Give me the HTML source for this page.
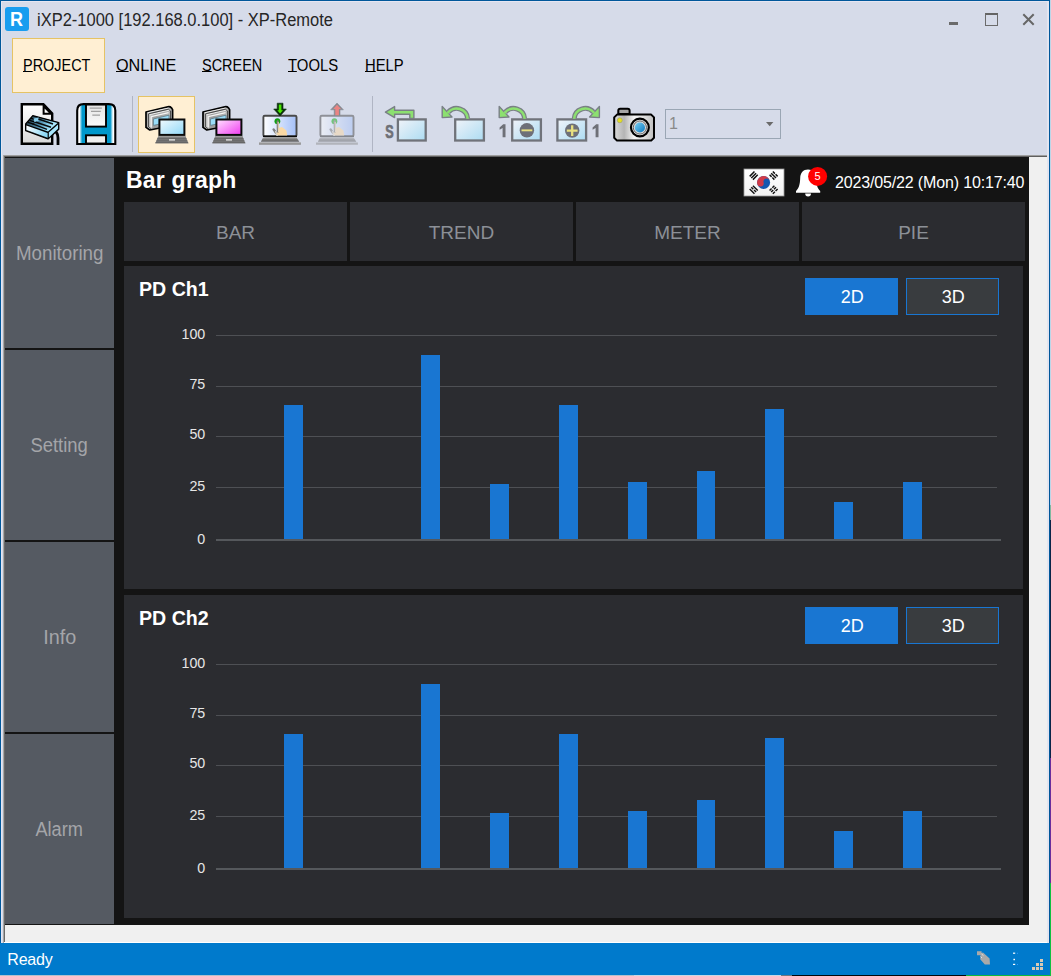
<!DOCTYPE html>
<html>
<head>
<meta charset="utf-8">
<title>XP-Remote</title>
<style>
html,body{margin:0;padding:0;}
body{width:1051px;height:976px;overflow:hidden;position:relative;background:#D6DBE9;font-family:"Liberation Sans",sans-serif;}
.abs{position:absolute;}
.t{position:absolute;white-space:nowrap;line-height:1;}
/* window frame */
#bTop{left:0;top:0;width:1050px;height:1px;background:#00579A;}
#bLeft{left:0;top:0;width:1px;height:943px;background:#00579A;}
#bRight{left:1049px;top:0;width:1px;height:943px;background:#00579A;}
#bRight2{left:1050px;top:0;width:1px;height:976px;background:linear-gradient(180deg,#BCD6E8 0,#BCD6E8 505px,#7FB8A0 505px,#7FB8A0 520px,#0A2448 520px,#0A2448 758px,#6A2C9C 758px,#6A2C9C 883px,#12C040 883px,#12C040 976px);}
#hlL{left:1px;top:1px;width:1px;height:942px;background:#E6E6F2;}
#hlT{left:1px;top:1px;width:1048px;height:1px;background:#E6E6F2;}
#hlR{left:1047px;top:2px;width:2px;height:941px;background:#E3E5F0;}
/* menu */
.menu{position:absolute;top:57px;font-size:17px;color:#000;line-height:17px;white-space:nowrap;transform-origin:0 0;}
.menu u{text-decoration:underline;text-decoration-thickness:1px;text-underline-offset:0.4px;}
/* client */
#client{left:3px;top:155px;width:1044px;height:788px;background:#F0F0F0;}
#screen{left:5px;top:157px;width:1024px;height:768px;background:#141414;overflow:hidden;}
.sb{position:absolute;left:0;width:109px;height:190px;background:#555A62;color:#A4A5A9;font-size:20px;text-align:center;line-height:191px;}
.sb span{display:inline-block;transform-origin:50% 50%;}
.tab{position:absolute;top:45px;width:223px;height:59px;background:#2B2C30;color:#8C9097;font-size:19px;text-align:center;line-height:61px;}
.panel{position:absolute;left:119px;width:899px;height:323px;background:#2B2C30;}
.ptitle{position:absolute;left:15px;top:12.6px;font-size:19.6px;font-weight:bold;color:#fff;line-height:20px;white-space:nowrap;}
.b2d{position:absolute;left:681px;top:12px;width:93px;height:37px;background:#1976D2;color:#fff;font-size:18px;text-align:center;line-height:38px;text-indent:1.5px;}
.b3d{position:absolute;left:782px;top:12px;width:91px;height:35px;background:#393C3F;border:1px solid #1976D2;color:#fff;font-size:18px;text-align:center;line-height:36px;text-indent:1.5px;}
.gl{position:absolute;left:92px;width:781px;height:1px;background:#4E5054;}
.base{position:absolute;left:92px;top:273px;width:785px;height:2px;background:#55585C;}
.yl{position:absolute;left:40px;width:41.3px;text-align:right;font-size:15.5px;color:#E6E6E6;line-height:14px;transform:scaleX(0.92);transform-origin:100% 50%;margin-top:-0.5px;}
.bar{position:absolute;width:19px;background:#1976D2;}
/* status */
#status{left:0;top:943px;width:1050px;height:32px;background:#007ACC;}
</style>
</head>
<body>
<!-- title bar -->
<div class="abs" id="titleicon" style="left:5px;top:7px;width:24px;height:24px;background:#189DEF;border-radius:3px;"></div>
<div class="t" id="titleR" style="left:9.8px;top:8.8px;font-size:20px;font-weight:bold;color:#fff;transform:scaleX(0.9);transform-origin:0 0;">R</div>
<div class="t" id="title" style="left:37px;top:11.5px;font-size:17.5px;color:#262626;transform:scaleX(0.942);transform-origin:0 0;">iXP2-1000 [192.168.0.100] - XP-Remote</div>
<!-- window controls -->
<div class="abs" style="left:949px;top:22px;width:9px;height:3px;background:#6B6B6B;"></div>
<div class="abs" style="left:985px;top:13px;width:11px;height:10px;border:1px solid #6B6B6B;border-top:2px solid #646464;"></div>
<svg class="abs" style="left:1021px;top:12px;" width="15" height="15" viewBox="0 0 15 15"><path d="M2.3 2.3 L12.7 12.7 M12.7 2.3 L2.3 12.7" stroke="#666666" stroke-width="2" fill="none"/></svg>

<!-- menu -->
<div class="abs" style="left:12px;top:38px;width:91px;height:53px;background:#FFEFD3;border:1px solid #E5C365;"></div>
<div class="menu" id="m1" style="left:23px;transform:scaleX(0.85);"><u>P</u>ROJECT</div>
<div class="menu" id="m2" style="left:116px;transform:scaleX(0.953);"><u>O</u>NLINE</div>
<div class="menu" id="m3" style="left:202px;transform:scaleX(0.851);"><u>S</u>CREEN</div>
<div class="menu" id="m4" style="left:288px;transform:scaleX(0.876);"><u>T</u>OOLS</div>
<div class="menu" id="m5" style="left:365px;transform:scaleX(0.871);"><u>H</u>ELP</div>

<!-- toolbar -->
<div class="abs" style="left:132px;top:96px;width:1px;height:56px;background:#B0B5C4;"></div>
<div class="abs" style="left:372px;top:96px;width:1px;height:56px;background:#B0B5C4;"></div>
<div class="abs" style="left:138px;top:96px;width:55px;height:55px;background:#FFEFD3;border:1px solid #E5C365;"></div>
<!--ICONS-START-->
<svg class="abs" style="left:0;top:0;" width="1051" height="156" viewBox="0 0 1051 156">
<defs>
<linearGradient id="gDoc" x1="0" y1="0" x2="0" y2="1"><stop offset="0" stop-color="#FFFFFF"/><stop offset="1" stop-color="#D8D8D8"/></linearGradient>
<linearGradient id="gPlugF" x1="0" y1="0" x2="1" y2="0.5"><stop offset="0" stop-color="#FFFFFF"/><stop offset="1" stop-color="#8ED8F4"/></linearGradient>
<linearGradient id="gPlugT" x1="0" y1="0" x2="1" y2="0.3"><stop offset="0" stop-color="#1C2A30"/><stop offset="0.5" stop-color="#4A88A6"/><stop offset="0.78" stop-color="#8AD4F0"/><stop offset="1" stop-color="#B4ECFF"/></linearGradient>
<linearGradient id="gLbl" x1="0" y1="0" x2="0" y2="1"><stop offset="0" stop-color="#E4E4E4"/><stop offset="1" stop-color="#FBFBFB"/></linearGradient>
<linearGradient id="gScrB" x1="0" y1="0" x2="1" y2="1"><stop offset="0" stop-color="#F2FAFE"/><stop offset="1" stop-color="#8FD8F8"/></linearGradient>
<linearGradient id="gScrP" x1="0" y1="0" x2="1" y2="1"><stop offset="0" stop-color="#FFE4FF"/><stop offset="1" stop-color="#F038F0"/></linearGradient>
<linearGradient id="gHmi" x1="0" y1="0" x2="1" y2="0"><stop offset="0" stop-color="#8A8A8A"/><stop offset="0.12" stop-color="#D0D0D0"/><stop offset="0.3" stop-color="#9A9A9A"/><stop offset="1" stop-color="#B8B8B8"/></linearGradient>
<linearGradient id="gTouch" x1="0" y1="0" x2="1" y2="0"><stop offset="0" stop-color="#FFFFFF"/><stop offset="1" stop-color="#A4C0F8"/></linearGradient>
<linearGradient id="gBase" x1="0" y1="0" x2="0" y2="1"><stop offset="0" stop-color="#CACACA"/><stop offset="0.28" stop-color="#7E7E7E"/><stop offset="1" stop-color="#626262"/></linearGradient>
<linearGradient id="gBox" x1="0" y1="0" x2="1" y2="1"><stop offset="0" stop-color="#F0F3F9"/><stop offset="1" stop-color="#ACDCF2"/></linearGradient>
<linearGradient id="gCam" x1="0" y1="0" x2="1" y2="0"><stop offset="0" stop-color="#DCDCDC"/><stop offset="0.25" stop-color="#B4B4B4"/><stop offset="0.42" stop-color="#E0E0E0"/><stop offset="0.5" stop-color="#F6F6F6"/><stop offset="0.8" stop-color="#DADADA"/><stop offset="1" stop-color="#BEBEBE"/></linearGradient>
<linearGradient id="gLens" x1="0" y1="0" x2="1" y2="1"><stop offset="0" stop-color="#7AD0F4"/><stop offset="1" stop-color="#0A78C0"/></linearGradient>
<linearGradient id="gFlop" x1="0" y1="0" x2="1" y2="0"><stop offset="0" stop-color="#FFFFFF"/><stop offset="0.06" stop-color="#FFFFFF"/><stop offset="0.13" stop-color="#0098CC"/><stop offset="0.87" stop-color="#0098CC"/><stop offset="0.94" stop-color="#FFFFFF"/><stop offset="1" stop-color="#FFFFFF"/></linearGradient>
</defs>

<!-- icon1: document + rj45 plug -->
<g id="ic1">
<path d="M21.8 104.3 L43.4 104.3 L52.2 113.4 L52.2 143.7 L21.8 143.7 Z" fill="url(#gDoc)" stroke="#000" stroke-width="2.4" stroke-linejoin="miter"/>
<path d="M42.6 104.3 L53 114.8 L42.6 114.8 Z" fill="#000"/>
<path d="M44.6 108.6 L48.8 112.8 L44.6 112.8 Z" fill="#fff"/>
<!-- cable -->
<path d="M52.2 130.2 C57 131 58 134 58 138 L58 144.9" fill="none" stroke="#000" stroke-width="2.8"/>
<!-- plug -->
<path d="M25.6 124 L32.8 115.6 L58.8 122.6 L58.8 129.2 L48 139 L25.6 130.6 Z" fill="#000" stroke="#000" stroke-width="1.2" stroke-linejoin="round"/>
<path d="M26.4 124.2 L33 116.6 L57.6 123 L48 131.4 Z" fill="url(#gPlugT)"/>
<path d="M26.4 125.6 L47.6 133 L47.6 137.8 L26.4 130 Z" fill="url(#gPlugF)"/>
<path d="M48.8 132.6 L58 124.4 L58 128.8 L48.8 137.4 Z" fill="#A8E6FC"/>
<path d="M28 122.4 L34.5 124.4 M29.6 120.4 L36 122.4 M31.2 118.4 L36.6 120" stroke="#000" stroke-width="1.3"/>
<path d="M33.6 118.6 L38.8 117.4 L38.6 121 L34.4 122 Z" fill="#86CCEA"/>
<path d="M38.4 119 L53 124 M36 122.2 L51 127.2 M32 123.6 L47 129.4" stroke="#0A0A0A" stroke-width="1.5"/>
</g>

<!-- icon2: floppy -->
<g id="ic2">
<path d="M77.2 144 L77.2 110.5 Q77.2 104.1 83.6 104.1 L108.9 104.1 Q115.3 104.1 115.3 110.5 L115.3 144 Z" fill="url(#gFlop)" stroke="#000" stroke-width="2.1"/>
<rect x="86" y="104.6" width="20" height="22" fill="url(#gLbl)" stroke="#000" stroke-width="1.9"/>
<path d="M89.7 108.1 L101.9 108.1 M91 111.4 L100.8 111.4 M92.3 115.2 L100 115.2" stroke="#A0A0A0" stroke-width="1.3"/>
<rect x="86" y="135.3" width="20" height="8.2" fill="#EFEFEF" stroke="#000" stroke-width="1.9"/>
</g>

<!-- icon3: hmi + laptop (blue) -->
<g id="ic3">
<path d="M146 112 L167.8 106.8 Q170 106.3 171.4 107.8 L172.6 109.6 L172.6 121 L160 126 L160 128 L149.8 130 L146 127.4 Z" fill="url(#gHmi)" stroke="#000" stroke-width="1.7" stroke-linejoin="round"/>
<path d="M147.5 112.8 L168.6 108 M149.5 114.6 L169.8 110" stroke="#E8E8E8" stroke-width="1.1" fill="none"/>
<path d="M148.6 113.8 L168.4 109.2 L170.6 111 L170.6 119 M148.6 113.8 L148.6 127 L151 128.6" stroke="#3A3A3A" stroke-width="0.9" fill="none"/><path d="M151.2 116.6 L168.6 112.6 M151.2 116.6 L151.2 127.4" stroke="#F4F4F4" stroke-width="1.3" fill="none"/>
<path d="M153.4 119 L169 115.2 L169 122 L153.4 125.4 Z" fill="#9ADCF8" stroke="#5A7A88" stroke-width="0.8"/>
<rect x="159.4" y="119.5" width="25" height="15.4" fill="url(#gScrB)" stroke="#0A0A0A" stroke-width="2"/>
<path d="M158.2 136.2 L185.5 136.2 L188.4 143.2 L155.3 143.2 Z" fill="#777"/>
<path d="M158.2 136.2 L185.5 136.2 L185.9 137.3 L157.8 137.3 Z" fill="#9C9C9C"/>
<path d="M155.8 142 L187.9 142 L188.4 143.2 L155.3 143.2 Z" fill="#666"/>
<path d="M157.2 138.6 L186.6 138.6 M156.4 140.8 L187.4 140.8" stroke="#606060" stroke-width="0.7"/><rect x="169" y="139" width="6" height="1.7" fill="#CFCFCF"/>
</g>
<!-- icon4: hmi + laptop (pink) -->
<g id="ic4" transform="translate(57 0)">
<path d="M146 112 L167.8 106.8 Q170 106.3 171.4 107.8 L172.6 109.6 L172.6 121 L160 126 L160 128 L149.8 130 L146 127.4 Z" fill="url(#gHmi)" stroke="#000" stroke-width="1.7" stroke-linejoin="round"/>
<path d="M147.5 112.8 L168.6 108 M149.5 114.6 L169.8 110" stroke="#E8E8E8" stroke-width="1.1" fill="none"/>
<path d="M148.6 113.8 L168.4 109.2 L170.6 111 L170.6 119 M148.6 113.8 L148.6 127 L151 128.6" stroke="#3A3A3A" stroke-width="0.9" fill="none"/><path d="M151.2 116.6 L168.6 112.6 M151.2 116.6 L151.2 127.4" stroke="#F4F4F4" stroke-width="1.3" fill="none"/>
<path d="M153.4 119 L169 115.2 L169 122 L153.4 125.4 Z" fill="#9ADCF8" stroke="#5A7A88" stroke-width="0.8"/>
<rect x="159.4" y="119.5" width="25" height="15.4" fill="url(#gScrP)" stroke="#0A0A0A" stroke-width="2"/>
<path d="M158.2 136.2 L185.5 136.2 L188.4 143.2 L155.3 143.2 Z" fill="#777"/>
<path d="M158.2 136.2 L185.5 136.2 L185.9 137.3 L157.8 137.3 Z" fill="#9C9C9C"/>
<path d="M155.8 142 L187.9 142 L188.4 143.2 L155.3 143.2 Z" fill="#666"/>
<path d="M157.2 138.6 L186.6 138.6 M156.4 140.8 L187.4 140.8" stroke="#606060" stroke-width="0.7"/><rect x="169" y="139" width="6" height="1.7" fill="#CFCFCF"/>
</g>

<!-- icon5: download to touch panel -->
<g id="ic5">
<rect x="263.4" y="115.7" width="33.1" height="20.8" rx="1.4" fill="url(#gTouch)" stroke="#4A4A4A" stroke-width="1.9"/>
<path d="M263 136.4 L297 136.4" stroke="#0A0A0A" stroke-width="1.6"/>
<path d="M263 137.6 L296.6 137.6 L299.3 141.8 L260.9 141.8 Z" fill="url(#gBase)"/>
<path d="M259 142.4 L300.9 142.4 L300.9 144.8 L259 144.8 Z" fill="#8E8E8E"/>
<path d="M259 142.4 L300.9 142.4 L300.9 143.3 L259 143.3 Z" fill="#B4B4B4"/>
<!-- hand -->
<path d="M278.4 128 L282 127 L286.4 130.6 L287.2 135.6 L276.2 135.6 L274.4 132.2 L277 132.4 Z" fill="#FBD9A4"/>
<path d="M273.6 129.4 L275.6 132.4" stroke="#808080" stroke-width="2.4" fill="none" stroke-linecap="round"/><path d="M275.6 131.6 L277.2 135.4" stroke="#D8D4CC" stroke-width="1.3" fill="none" stroke-linecap="round"/>
<circle cx="277.4" cy="121.2" r="2.9" fill="#12A012"/>
<path d="M277.7 121.4 L277.9 131.6" stroke="#7E7E78" stroke-width="2.2" fill="none" stroke-linecap="round"/><path d="M278.2 122.4 L278.5 131.6" stroke="#EED8B4" stroke-width="1" fill="none" stroke-linecap="round"/>

<!-- arrow -->
<path d="M277.2 103.2 L283 103.2 L283 109 L286.4 109 L280.1 116 L273.7 109 L277.2 109 Z" fill="#0C300C" stroke="#0C300C" stroke-width="0.6" stroke-linejoin="round"/>
<path d="M278.8 104.4 L281.4 104.4 L281.4 110.2 L283 110.2 L280.1 113.6 L277.2 110.2 L278.8 110.2 Z" fill="#48E800"/>
</g>
<!-- icon6: upload (disabled) -->
<g id="ic6" transform="translate(57 0)" opacity="0.5">
<rect x="263.4" y="115.7" width="33.1" height="20.8" rx="1.4" fill="url(#gTouch)" stroke="#4A4A4A" stroke-width="1.9"/>
<path d="M263 136.4 L297 136.4" stroke="#333" stroke-width="1.6"/>
<path d="M263 137.6 L296.6 137.6 L299.3 141.8 L260.9 141.8 Z" fill="url(#gBase)"/>
<path d="M259 142.4 L300.9 142.4 L300.9 144.8 L259 144.8 Z" fill="#8E8E8E"/>
<path d="M278.4 128 L282 127 L286.4 130.6 L287.2 135.6 L276.2 135.6 L274.4 132.2 L277 132.4 Z" fill="#FBD9A4"/>
<path d="M273.6 129.4 L275.6 132.4" stroke="#808080" stroke-width="2.4" fill="none" stroke-linecap="round"/><path d="M275.6 131.6 L277.2 135.4" stroke="#D8D4CC" stroke-width="1.3" fill="none" stroke-linecap="round"/>
<circle cx="277.4" cy="121.2" r="2.9" fill="#12B012"/>
<path d="M277.7 121.4 L277.9 131.6" stroke="#7E7E78" stroke-width="2.2" fill="none" stroke-linecap="round"/><path d="M278.2 122.4 L278.5 131.6" stroke="#EED8B4" stroke-width="1" fill="none" stroke-linecap="round"/>
<path d="M280 103 L286.4 109.8 L283 109.8 L283 115.6 L277.2 115.6 L277.2 109.8 L273.7 109.8 Z" fill="#3A3A3A" stroke="#3A3A3A" stroke-width="0.6" stroke-linejoin="round"/>
<path d="M280 104.8 L284 109 L281.9 109 L281.9 115.2 L278.3 115.2 L278.3 109 L276.2 109 Z" fill="#FF3020"/>
</g>

<!-- icon7: S box with left arrow -->
<g id="ic7">
<rect x="397.9" y="119.4" width="27.8" height="21.1" fill="url(#gBox)" stroke="#70737A" stroke-width="2.3"/>
<path d="M385.4 112.2 L394.6 106.6 L394.6 110.3 L413.9 110.3 L413.9 118.4 L409.8 118.4 L409.8 114.3 L394.6 114.3 L394.6 117.6 Z" fill="#8CE070" stroke="#7A8086" stroke-width="1.4" stroke-linejoin="round"/>
<text x="385" y="137.6" font-family="Liberation Sans, sans-serif" font-weight="bold" font-size="18.5" fill="#6E7077" stroke="#6E7077" stroke-width="0.7" transform="translate(385.3 0) scale(0.68 1) translate(-385 0)">S</text>
</g>

<!-- icon8: box with curved arrow -->
<g id="ic8">
<rect x="455.2" y="119.4" width="28.7" height="21.1" fill="url(#gBox)" stroke="#70737A" stroke-width="2.3"/>
<path d="M467.6 118.6 A 11 10.6 0 0 0 448.4 112" fill="none" stroke="#7A8086" stroke-width="5"/>
<path d="M442.2 106.6 L442.2 117.6 L452 117 L449.6 114.4 Z" fill="#8CE070" stroke="#7A8086" stroke-width="1.4" stroke-linejoin="round"/>
<path d="M467.6 118.8 A 11 10.6 0 0 0 447.6 113" fill="none" stroke="#8CE070" stroke-width="2.5"/>
</g>
<!-- icon9 -->
<g id="ic9" transform="translate(57 0)">
<rect x="455.2" y="119.4" width="28.7" height="21.1" fill="url(#gBox)" stroke="#70737A" stroke-width="2.3"/>
<path d="M467.6 118.6 A 11 10.6 0 0 0 448.4 112" fill="none" stroke="#7A8086" stroke-width="5"/>
<path d="M442.2 106.6 L442.2 117.6 L452 117 L449.6 114.4 Z" fill="#8CE070" stroke="#7A8086" stroke-width="1.4" stroke-linejoin="round"/>
<path d="M467.6 118.8 A 11 10.6 0 0 0 447.6 113" fill="none" stroke="#8CE070" stroke-width="2.5"/>
<circle cx="469.9" cy="130.3" r="7.2" fill="#6E7078"/>
<rect x="464.5" y="129.4" width="10.8" height="1.9" fill="#E8E080"/>
<path d="M442.6 127.6 L446.2 124.3 L448.5 124.3 L448.5 137.2 L445.6 137.2 L445.6 128 L442.6 129.8 Z" fill="#6E7077"/>
</g>
<!-- icon10 -->
<g id="ic10">
<rect x="557.4" y="119.4" width="28.7" height="21.1" fill="url(#gBox)" stroke="#70737A" stroke-width="2.3"/>
<path d="M574.2 118.6 A 11 10.6 0 0 1 593.4 112" fill="none" stroke="#7A8086" stroke-width="5"/>
<path d="M599.4 106.6 L599.4 117.6 L589.6 117 L592 114.4 Z" fill="#8CE070" stroke="#7A8086" stroke-width="1.4" stroke-linejoin="round"/>
<path d="M574.2 118.8 A 11 10.6 0 0 1 594.2 113" fill="none" stroke="#8CE070" stroke-width="2.5"/>
<circle cx="572.2" cy="130.6" r="7.2" fill="#6E7078"/>
<path d="M566.8 130.6 L577.6 130.6 M572.2 125.2 L572.2 136" stroke="#E8E080" stroke-width="2.3"/>
<path d="M592.6 127.6 L596.2 124.3 L598.5 124.3 L598.5 137.2 L595.6 137.2 L595.6 128 L592.6 129.8 Z" fill="#6E7077"/>
</g>

<!-- icon11: camera -->
<g id="ic11">
<path d="M618.3 114 L618.3 110.6 Q618.3 108.7 620.2 108.7 L627.7 108.7 Q629.6 108.7 629.6 110.6 L629.6 114 Z" fill="#A4A4A4" stroke="#000" stroke-width="2"/>
<path d="M617 114.6 L651.2 114.6 L654 117.4 L654 137.8 L651.2 140.6 L617 140.6 L614.2 137.8 L614.2 117.4 Z" fill="url(#gCam)" stroke="#000" stroke-width="2" stroke-linejoin="round"/>
<circle cx="639.9" cy="127.5" r="8.9" fill="#F0F0F0" stroke="#000" stroke-width="2.2"/>
<circle cx="639.9" cy="127.5" r="6.6" fill="#D8D8D8" stroke="#444" stroke-width="0.8"/>
<circle cx="639.9" cy="127.5" r="5.1" fill="url(#gLens)"/>
<circle cx="619.8" cy="120.3" r="2.5" fill="#E6E01E" stroke="#9A9A70" stroke-width="0.6"/>
</g>
</svg>
<!--ICONS-END-->

<!-- combobox -->
<div class="abs" style="left:665px;top:109px;width:114px;height:28px;border:1px solid #9AA6B4;"></div>
<div class="t" style="left:669px;top:116px;font-size:16px;color:#8A8A8A;">1</div>
<svg class="abs" style="left:765px;top:121px;" width="10" height="6" viewBox="0 0 10 6"><path d="M1 1 L8.4 1 L4.7 5.2 Z" fill="#6A6A6A"/></svg>

<!-- client area -->
<div class="abs" id="client"></div>
<div class="abs" style="left:3px;top:155px;width:1044px;height:1px;background:#9E9E9E;"></div>
<div class="abs" style="left:4px;top:156px;width:1043px;height:1px;background:#5F5F5F;"></div>
<div class="abs" style="left:3px;top:155px;width:1px;height:788px;background:#A6A6A6;"></div>
<div class="abs" style="left:4px;top:156px;width:1px;height:786px;background:#6A6A6A;"></div>
<div class="abs" style="left:4px;top:942px;width:1044px;height:1px;background:#FFFFFF;"></div>

<div class="abs" id="screen">
  <!-- sidebar -->
  <div class="sb" style="top:1px;"><span id="sb1" style="transform:scaleX(0.938);">Monitoring</span></div>
  <div class="sb" style="top:193px;"><span id="sb2" style="transform:scaleX(0.923);">Setting</span></div>
  <div class="sb" style="top:385px;"><span id="sb3" style="transform:scaleX(0.99);">Info</span></div>
  <div class="sb" style="top:577px;"><span id="sb4" style="transform:scaleX(0.908);">Alarm</span></div>
  <!-- header -->
  <div class="t" id="hdr" style="left:121px;top:12px;font-size:23px;font-weight:bold;color:#fff;letter-spacing:0.22px;">Bar graph</div>
  <svg class="abs" style="left:730px;top:8px;" width="100" height="36" viewBox="735 165 100 36">
<defs><linearGradient id="gFlag" x1="0" y1="0" x2="0" y2="1"><stop offset="0" stop-color="#FFFFFF"/><stop offset="1" stop-color="#F2F2F2"/></linearGradient></defs>
<rect x="744" y="169" width="40" height="27" fill="url(#gFlag)" stroke="#9A9A9A" stroke-width="0.8"/>
<g transform="translate(763.6 182.5)">
<circle r="6.5" fill="#1458B0"/>
<path transform="rotate(-14)" d="M-6.5 0 A6.5 6.5 0 0 1 6.5 0 A3.25 3.25 0 0 0 0 0 A3.25 3.25 0 0 1 -6.5 0 Z" fill="#D03A48"/>
<g stroke="#111" stroke-width="1.45">
<g transform="translate(-9.9 -6.9) rotate(45)"><path d="M-2.3 -3.4 L-2.3 3.4 M0 -3.4 L0 3.4 M2.3 -3.4 L2.3 3.4"/></g>
<g transform="translate(10 -6.9) rotate(-45)"><path d="M-2.3 -3.4 L-2.3 -0.5 M-2.3 0.5 L-2.3 3.4 M0 -3.4 L0 3.4 M2.3 -3.4 L2.3 -0.5 M2.3 0.5 L2.3 3.4"/></g>
<g transform="translate(-9.9 7.2) rotate(-45)"><path d="M-2.3 -3.4 L-2.3 3.4 M0 -3.4 L0 -0.5 M0 0.5 L0 3.4 M2.3 -3.4 L2.3 3.4"/></g>
<g transform="translate(10 7.2) rotate(45)"><path d="M-2.3 -3.4 L-2.3 -0.5 M-2.3 0.5 L-2.3 3.4 M0 -3.4 L0 -0.5 M0 0.5 L0 3.4 M2.3 -3.4 L2.3 -0.5 M2.3 0.5 L2.3 3.4"/></g>
</g>
</g>
<!-- bell -->
<path d="M808 169.6 C803.2 169.6 800.4 173 800.2 178 C800 184.6 798.8 188.4 796 191 L796 192.8 L820.2 192.8 L820.2 191 C817.4 188.4 816.2 184.6 816 178 C815.8 173 812.8 169.6 808 169.6 Z" fill="#fff"/>
<path d="M805.2 193.6 A2.9 2.9 0 0 0 811 193.6 Z" fill="#fff"/>
<circle cx="817.6" cy="176.4" r="9.5" fill="#FF0000"/>
<text x="817.5" y="179.6" text-anchor="middle" font-family="Liberation Sans, sans-serif" font-size="11" fill="#fff">5</text>
</svg>
  <div class="t" id="dt" style="left:830px;top:17.8px;font-size:16px;color:#fff;letter-spacing:-0.15px;">2023/05/22 (Mon) 10:17:40</div>
  <!-- tabs -->
  <div class="tab" style="left:119px;">BAR</div>
  <div class="tab" style="left:345px;">TREND</div>
  <div class="tab" style="left:571px;">METER</div>
  <div class="tab" style="left:797px;">PIE</div>
  <!-- panel 1 -->
  <div class="panel" style="top:109px;">
    <div class="ptitle">PD Ch1</div>
    <div class="b2d">2D</div><div class="b3d">3D</div>
    <div class="gl" style="top:69px;"></div><div class="gl" style="top:120px;"></div><div class="gl" style="top:170px;"></div><div class="gl" style="top:221px;"></div>
    <div class="base"></div>
    <div class="yl" style="top:61px;">100</div><div class="yl" style="top:111px;">75</div><div class="yl" style="top:161px;">50</div><div class="yl" style="top:213.5px;">25</div><div class="yl" style="top:266px;">0</div>
    <div class="bar" style="left:160px;top:139px;height:134px;"></div>
    <div class="bar" style="left:297px;top:89px;height:184px;"></div>
    <div class="bar" style="left:366px;top:218px;height:55px;"></div>
    <div class="bar" style="left:435px;top:139px;height:134px;"></div>
    <div class="bar" style="left:504px;top:216px;height:57px;"></div>
    <div class="bar" style="left:573px;top:205px;height:68px;width:18px;"></div>
    <div class="bar" style="left:641px;top:143px;height:130px;"></div>
    <div class="bar" style="left:710px;top:236px;height:37px;"></div>
    <div class="bar" style="left:779px;top:216px;height:57px;"></div>
  </div>
  <!-- panel 2 -->
  <div class="panel" style="top:438px;">
    <div class="ptitle">PD Ch2</div>
    <div class="b2d">2D</div><div class="b3d">3D</div>
    <div class="gl" style="top:69px;"></div><div class="gl" style="top:120px;"></div><div class="gl" style="top:170px;"></div><div class="gl" style="top:221px;"></div>
    <div class="base"></div>
    <div class="yl" style="top:61px;">100</div><div class="yl" style="top:111px;">75</div><div class="yl" style="top:161px;">50</div><div class="yl" style="top:213.5px;">25</div><div class="yl" style="top:266px;">0</div>
    <div class="bar" style="left:160px;top:139px;height:134px;"></div>
    <div class="bar" style="left:297px;top:89px;height:184px;"></div>
    <div class="bar" style="left:366px;top:218px;height:55px;"></div>
    <div class="bar" style="left:435px;top:139px;height:134px;"></div>
    <div class="bar" style="left:504px;top:216px;height:57px;"></div>
    <div class="bar" style="left:573px;top:205px;height:68px;width:18px;"></div>
    <div class="bar" style="left:641px;top:143px;height:130px;"></div>
    <div class="bar" style="left:710px;top:236px;height:37px;"></div>
    <div class="bar" style="left:779px;top:216px;height:57px;"></div>
  </div>
</div>

<!-- status bar -->
<div class="abs" id="status"></div>
<div class="t" id="ready" style="left:7.3px;top:952px;font-size:16px;color:#fff;letter-spacing:-0.2px;">Ready</div>
<svg class="abs" style="left:970px;top:945px;" width="80" height="30" viewBox="970 945 80 30">
<path d="M977 951.2 L981.6 951.2 L981.6 953 L983 952.4 L989.6 958.4 L990 964.4 L984.8 964.4 L980.2 959.2 L980.6 955.2 L977 955.2 Z" fill="#A9A9A9"/>
<path d="M981.6 954 L983.4 955.6 M980.6 956.6 L982 958" stroke="#E8E8E8" stroke-width="0.9"/>
<rect x="1013" y="952.6" width="2.2" height="1.2" fill="#fff"/><rect x="1013.4" y="958.8" width="1.6" height="1.4" fill="#fff"/><rect x="1013" y="963.8" width="2.2" height="1.2" fill="#fff"/>
<rect x="1017" y="952.8" width="1" height="1" fill="#2E9BFF"/><rect x="1017" y="964" width="1" height="1" fill="#2E9BFF"/>
<g fill="#D9C9B4"><rect x="1040" y="959" width="3" height="3"/><rect x="1036" y="963" width="3" height="3"/><rect x="1040" y="963" width="3" height="3"/><rect x="1032" y="967" width="3" height="3"/><rect x="1036" y="967" width="3" height="3"/><rect x="1040" y="967" width="3" height="3"/></g>
</svg>
<div class="abs" style="left:0;top:975px;width:1051px;height:1px;background:linear-gradient(90deg,#B4C0CC 0,#B4C0CC 634px,#C8D8E4 634px,#C8D8E4 781px,#707880 781px,#707880 792px,#04080C 792px,#04080C 966px,#12B83C 966px);"></div>

<!-- frame on top -->
<div class="abs" id="hlT"></div><div class="abs" id="hlL"></div><div class="abs" id="hlR"></div>
<div class="abs" id="bTop"></div><div class="abs" id="bLeft"></div><div class="abs" id="bRight"></div><div class="abs" id="bRight2"></div>
</body>
</html>
